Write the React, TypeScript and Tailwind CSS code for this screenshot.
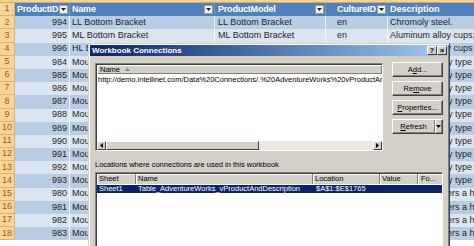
import React from 'react';

const rows: string[][] = [
  ['994', 'LL Bottom Bracket', 'LL Bottom Bracket', 'en', 'Chromoly steel.'],
  ['995', 'ML Bottom Bracket', 'ML Bottom Bracket', 'en', 'Aluminum alloy cups; large diameter spindle.'],
  ['996', 'HL Bottom Bracket', 'HL Bottom Bracket', 'en', 'Aluminum alloy cups and a hollow axle.'],
  ['984', 'Mountain-500 Silver, 40', 'Mountain-500', 'en', 'Suitable for any type of riding, on or off-road.'],
  ['985', 'Mountain-500 Silver, 42', 'Mountain-500', 'en', 'Suitable for any type of riding, on or off-road.'],
  ['986', 'Mountain-500 Silver, 44', 'Mountain-500', 'en', 'Suitable for any type of riding, on or off-road.'],
  ['987', 'Mountain-500 Silver, 48', 'Mountain-500', 'en', 'Suitable for any type of riding, on or off-road.'],
  ['988', 'Mountain-500 Silver, 52', 'Mountain-500', 'en', 'Suitable for any type of riding, on or off-road.'],
  ['989', 'Mountain-500 Black, 40', 'Mountain-500', 'en', 'Suitable for any type of riding, on or off-road.'],
  ['990', 'Mountain-500 Black, 42', 'Mountain-500', 'en', 'Suitable for any type of riding, on or off-road.'],
  ['991', 'Mountain-500 Black, 44', 'Mountain-500', 'en', 'Suitable for any type of riding, on or off-road.'],
  ['992', 'Mountain-500 Black, 48', 'Mountain-500', 'en', 'Suitable for any type of riding, on or off-road.'],
  ['993', 'Mountain-500 Black, 52', 'Mountain-500', 'en', 'Suitable for any type of riding, on or off-road.'],
  ['980', 'Mountain-400-W Silver, 38', 'Mountain-400-W', 'en', 'This bike delivers a high-level of performance on a budget.'],
  ['981', 'Mountain-400-W Silver, 40', 'Mountain-400-W', 'en', 'This bike delivers a high-level of performance on a budget.'],
  ['982', 'Mountain-400-W Silver, 42', 'Mountain-400-W', 'en', 'This bike delivers a high-level of performance on a budget.'],
  ['983', 'Mountain-400-W Silver, 46', 'Mountain-400-W', 'en', 'This bike delivers a high-level of performance on a budget.'],
];

function RowNum({ n }: { n: number }) {
  return (
    <div className="w-[15px] shrink-0 h-full flex items-center justify-center bg-[#f8d597] border-r border-b border-[#e6b261] text-[9px] text-[#9a5a16]">
      {n}
    </div>
  );
}

function FilterBtn() {
  return (
    <div className="w-[9px] h-[9px] shrink-0 bg-[#f2f2f2] border border-[#9a9a9a] flex items-center justify-center">
      <svg width="5" height="3" viewBox="0 0 5 3">
        <path d="M0 0h5L2.5 3z" fill="#222" />
      </svg>
    </div>
  );
}

function HeaderCell({ label, w, pl }: { label: string; w: string; pl: string }) {
  return (
    <div className={`${w} shrink-0 h-full flex items-center justify-between ${pl} pr-px border-r border-[#6e93c6]`}>
      <span className="font-bold text-white whitespace-nowrap tracking-[-0.2px]">{label}</span>
      <FilterBtn />
    </div>
  );
}

function Btn({ children, split }: { children: React.ReactNode; split?: boolean }) {
  return (
    <div className="h-[15px] flex bg-[#d4d0c8] border border-t-white border-l-white border-r-[#404040] border-b-[#404040] shadow-[inset_-1px_-1px_0_#808080]">
      <div className="flex-1 flex items-center justify-center">
        <span className="whitespace-nowrap">{children}</span>
      </div>
      {split && (
        <div className="w-[8px] flex items-center justify-center border-l border-[#808080] shadow-[inset_1px_0_0_#fff]">
          <svg width="5" height="3" viewBox="0 0 5 3">
            <path d="M0 0h5L2.5 3z" fill="#000" />
          </svg>
        </div>
      )}
    </div>
  );
}

function ColHead({ label, w }: { label: string; w: string }) {
  return (
    <div className={`${w} shrink-0 h-full flex items-center pl-[2px] bg-[#d4d0c8] border-r border-[#808080] shadow-[inset_1px_1px_0_#fff]`}>
      {label}
    </div>
  );
}

export default function App() {
  return (
    <div className="relative w-[474px] h-[246px] overflow-hidden bg-white font-['Liberation_Sans',Arial,sans-serif] text-[#1f1f1f]">
      <div className="flex flex-col text-[9px]">
        <div className="h-[3px] bg-[#f6d190] border-b border-[#e3a84f]" />
        <div className="h-[13.2px] flex bg-[#4f81bd]">
          <RowNum n={1} />
          <HeaderCell label="ProductID" w="w-[55px]" pl="pl-[2px]" />
          <HeaderCell label="Name" w="w-[145px]" pl="pl-[2px]" />
          <HeaderCell label="ProductModel" w="w-[111px]" pl="pl-[3px]" />
          <HeaderCell label="CultureID" w="w-[62px]" pl="pl-[11px]" />
          <div className="flex-1 h-full flex items-center pl-[2px] font-bold text-white whitespace-nowrap">Description</div>
        </div>
        {rows.map((r, i) => (
          <div key={i} className={`h-[13.2px] flex ${i % 2 === 0 ? 'bg-[#b8cce4]' : 'bg-[#dbe5f1]'}`}>
            <RowNum n={i + 2} />
            <div className="w-[55px] shrink-0 h-full flex items-center justify-end pr-[2px] border-r border-white/70">{r[0]}</div>
            <div className="w-[145px] shrink-0 h-full flex items-center pl-[2px] border-r border-white/70 overflow-hidden whitespace-nowrap">{r[1]}</div>
            <div className="w-[111px] shrink-0 h-full flex items-center pl-[3px] border-r border-white/70 overflow-hidden whitespace-nowrap">{r[2]}</div>
            <div className="w-[62px] shrink-0 h-full flex items-center pl-[11px] border-r border-white/70">{r[3]}</div>
            <div className="flex-1 h-full flex items-center pl-[2px] whitespace-nowrap">{r[4]}</div>
          </div>
        ))}
      </div>

      {/* Workbook Connections dialog */}
      <div className="absolute left-[88px] top-[43px] w-[362px] h-[220px] bg-[#d4d0c8] border border-t-[#d4d0c8] border-l-[#d4d0c8] border-r-[#404040] border-b-[#404040] p-px shadow-[inset_1px_1px_0_#fff,inset_-1px_-1px_0_#808080] text-[7.5px] text-black">
        <div className="h-[11px] flex items-center justify-between bg-gradient-to-r from-[#0a246a] to-[#a6caf0] pl-[2px] pr-px">
          <span className="font-bold text-white text-[8px]">Workbook Connections</span>
          <div className="flex">
            <div className="w-[10px] h-[9px] flex items-center justify-center bg-[#d4d0c8] border border-t-white border-l-white border-r-[#404040] border-b-[#404040] text-[7px] font-bold leading-none">?</div>
            <div className="w-[10px] h-[9px] flex items-center justify-center bg-[#d4d0c8] border border-t-white border-l-white border-r-[#404040] border-b-[#404040] text-[8px] font-bold leading-none">×</div>
          </div>
        </div>

        <div className="px-[5px] pt-[6px] flex flex-col">
          <div className="flex gap-[9px]">
            <div className="w-[288px] h-[88px] mt-px flex flex-col bg-white border border-t-[#808080] border-l-[#808080] border-r-white border-b-white shadow-[inset_1px_1px_0_#404040]">
              <div className="h-[9px] mt-px ml-px flex items-center gap-[5px] pl-[3px] bg-[#d4d0c8] shadow-[inset_1px_1px_0_#fff,inset_-1px_-1px_0_#808080]">
                <span>Name</span>
                <svg width="5" height="3" viewBox="0 0 5 3">
                  <path d="M0 3h5L2.5 0z" fill="#808080" />
                </svg>
              </div>
              <div className="flex-1 pl-[2px] pt-px overflow-hidden whitespace-nowrap leading-[9px]">
                http://demo.intellinet.com/Data%20Connections/.%20AdventureWorks%20vProductAndDescription.odc
              </div>
              <div className="h-[9px] ml-px flex bg-[#ebe9e4]">
                <div className="w-[9px] flex items-center justify-center bg-[#d4d0c8] border border-t-white border-l-white border-r-[#404040] border-b-[#404040]">
                  <svg width="3" height="5" viewBox="0 0 3 5"><path d="M3 0v5L0 2.5z" fill="#000" /></svg>
                </div>
                <div className="w-[153px] bg-[#d4d0c8] border border-t-white border-l-white border-r-[#404040] border-b-[#404040]" />
                <div className="flex-1" />
                <div className="w-[9px] flex items-center justify-center bg-[#d4d0c8] border border-t-white border-l-white border-r-[#404040] border-b-[#404040]">
                  <svg width="3" height="5" viewBox="0 0 3 5"><path d="M0 0v5L3 2.5z" fill="#000" /></svg>
                </div>
              </div>
            </div>
            <div className="w-[51px] flex flex-col gap-[4px]">
              <Btn>A<u>d</u>d...</Btn>
              <Btn>Re<u>m</u>ove</Btn>
              <Btn><u>P</u>roperties...</Btn>
              <Btn split><u>R</u>efresh</Btn>
            </div>
          </div>

          <div className="mt-[9px] leading-[9px] whitespace-nowrap">Locations where connections are used in this workbook</div>

          <div className="mt-[3px] w-[348px] h-[80px] bg-white border border-t-[#808080] border-l-[#808080] border-r-white border-b-white shadow-[inset_1px_1px_0_#404040] pl-px pt-px">
            <div className="h-[10px] flex">
              <ColHead label="Sheet" w="w-[39px]" />
              <ColHead label="Name" w="w-[177px]" />
              <ColHead label="Location" w="w-[67px]" />
              <ColHead label="Value" w="w-[38px]" />
              <div className="flex-1 h-full flex items-center pl-[3px] bg-[#d4d0c8] shadow-[inset_1px_1px_0_#fff]">Fo...</div>
            </div>
            <div className="mt-px h-[8px] flex items-center bg-[#0a246a] text-white whitespace-nowrap">
              <div className="w-[39px] pl-[2px]">Sheet1</div>
              <div className="w-[177px] pl-[2px]">Table_AdventureWorks_vProductAndDescription</div>
              <div className="w-[67px] pl-[3px]">$A$1:$E$1765</div>
            </div>
          </div>
        </div>
      </div>
    </div>
  );
}
